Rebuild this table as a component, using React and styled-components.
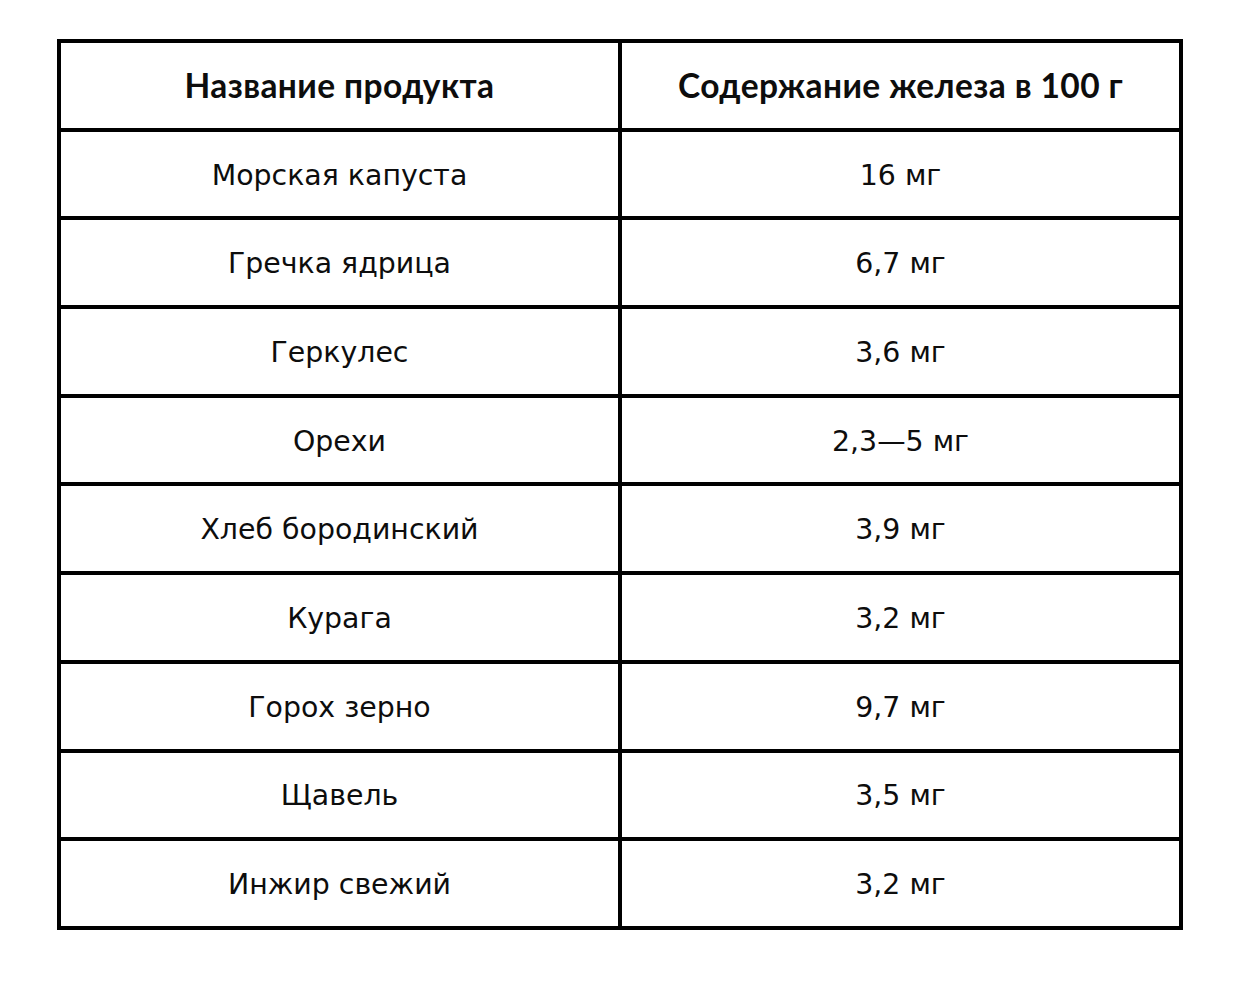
import React from "react";
import styled, { createGlobalStyle } from "styled-components";

const GlobalStyle = createGlobalStyle`
  html, body {
    margin: 0;
    padding: 0;
    background: #ffffff;
  }
  * {
    box-sizing: border-box;
  }
`;

const Page = styled.div`
  width: 1242px;
  height: 982px;
  padding: 39px 0 0 57px;
  background: #fff;
`;

const Table = styled.div`
  display: grid;
  grid-template-columns: 1fr 1fr;
  grid-template-rows: repeat(10, 1fr);
  gap: 4px;
  padding: 4px;
  width: 1126px;
  height: 891px;
  background: #000;
`;

const Cell = styled.div`
  display: flex;
  align-items: center;
  justify-content: center;
  background: #fff;
  color: #0d0d0d;
  font-family: ${(p) =>
    p.$head ? '"Lato", "DejaVu Sans", sans-serif' : '"DejaVu Sans", "Noto Sans", sans-serif'};
  font-weight: ${(p) => (p.$head ? 700 : 400)};
  font-size: ${(p) => (p.$head ? "33.5px" : "28.4px")};
  letter-spacing: ${(p) => (p.$head ? "0.4px" : "0")};
  padding-top: ${(p) => (p.$head ? "0" : "2px")};
`;

const rows = [
  ["Морская капуста", "16 мг"],
  ["Гречка ядрица", "6,7 мг"],
  ["Геркулес", "3,6 мг"],
  ["Орехи", "2,3—5 мг"],
  ["Хлеб бородинский", "3,9 мг"],
  ["Курага", "3,2 мг"],
  ["Горох зерно", "9,7 мг"],
  ["Щавель", "3,5 мг"],
  ["Инжир свежий", "3,2 мг"],
];

export default function App() {
  return (
    <>
      <GlobalStyle />
      <Page>
        <Table>
          <Cell $head>Название продукта</Cell>
          <Cell $head>Содержание железа в 100 г</Cell>
          {rows.map(([name, iron]) => (
            <React.Fragment key={name}>
              <Cell>{name}</Cell>
              <Cell>{iron}</Cell>
            </React.Fragment>
          ))}
        </Table>
      </Page>
    </>
  );
}
